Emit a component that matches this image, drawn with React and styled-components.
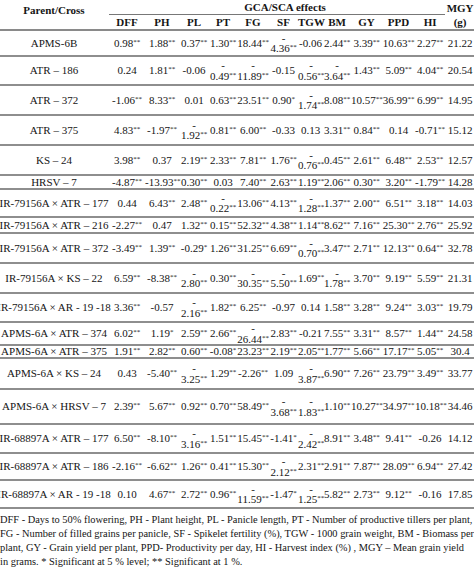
import React from 'react';
import styled, { createGlobalStyle } from 'styled-components';

const GlobalStyle = createGlobalStyle`
  html, body {
    margin: 0;
    padding: 0;
    background: #ffffff;
  }
  body {
    font-family: "Liberation Serif", "DejaVu Serif", serif;
    color: #151515;
    overflow: hidden;
  }
`;

const COLUMNS = [
  { key: 'DFF', w: 36 },
  { key: 'PH', w: 34 },
  { key: 'PL', w: 30 },
  { key: 'PT', w: 28 },
  { key: 'FG', w: 32 },
  { key: 'SF', w: 29 },
  { key: 'TGW', w: 25 },
  { key: 'BM', w: 28 },
  { key: 'GY', w: 31 },
  { key: 'PPD', w: 33 },
  { key: 'HI', w: 30 },
];

// '^' = the minus sign wrapped onto its own line above the number
// second field = row height in px, rule included
const ROWS = [
  ['APMS-6B', 26, ['0.98**', '1.88**', '0.37**', '1.30**', '18.44**', '^4.36**', '-0.06', '2.44**', '3.39**', '10.63**', '2.27**', '21.22']],
  ['ATR – 186', 29, ['0.24', '1.81**', '-0.06', '^0.49**', '^11.89**', '-0.15', '^0.56**', '^3.64**', '1.43**', '5.09**', '4.04**', '20.54']],
  ['ATR – 372', 30, ['-1.06**', '8.33**', '0.01', '0.63**', '23.51**', '0.90*', '^1.74**', '8.08**', '10.57**', '36.99**', '6.99**', '14.95']],
  ['ATR – 375', 30, ['4.83**', '-1.97**', '^1.92**', '0.81**', '6.00**', '-0.33', '0.13', '3.31**', '0.84**', '0.14', '-0.71**', '15.12']],
  ['KS – 24', 30, ['3.98**', '0.37', '2.19**', '2.33**', '7.81**', '1.76**', '^0.76**', '0.45**', '2.61**', '6.48**', '2.53**', '12.57']],
  ['HRSV – 7', 14, ['-4.87**', '-13.93**', '0.30**', '0.03', '7.40**', '2.63**', '1.19**', '2.06**', '0.30**', '3.20**', '-1.79**', '14.28']],
  ['IR-79156A × ATR – 177', 28, ['0.44', '6.43**', '2.48**', '^0.22**', '13.06**', '4.13**', '^1.28**', '1.37**', '2.00**', '6.51**', '3.18**', '14.03']],
  ['IR-79156A × ATR – 216', 16, ['-2.27**', '0.47', '1.32**', '0.15**', '52.32**', '4.38**', '1.14**', '8.62**', '7.16**', '25.30**', '2.76**', '25.92']],
  ['IR-79156A × ATR – 372', 30, ['-3.49**', '1.39**', '-0.29*', '1.26**', '31.25**', '6.69**', '^0.70**', '3.47**', '2.71**', '12.13**', '0.64**', '32.78']],
  ['IR-79156A × KS – 22', 30, ['6.59**', '-8.38**', '^2.80**', '0.30**', '^30.35**', '^5.50**', '1.69**', '^1.78**', '3.70**', '9.19**', '5.59**', '21.31']],
  ['IR-79156A × AR - 19 -18', 29, ['3.36**', '-0.57', '^2.16**', '1.82**', '6.25**', '-0.97', '0.14', '1.58**', '3.28**', '9.24**', '3.03**', '19.79']],
  ['APMS-6A × ATR – 374', 23, ['6.02**', '1.19*', '2.59**', '2.66**', '^26.44**', '2.83**', '-0.21', '7.55**', '3.31**', '8.57**', '1.44**', '24.58']],
  ['APMS-6A × ATR – 375', 13, ['1.91**', '2.82**', '0.60**', '-0.08*', '23.23**', '2.19**', '2.05**', '1.77**', '5.66**', '17.17**', '5.05**', '30.4']],
  ['APMS-6A × KS – 24', 31, ['0.43', '-5.40**', '^3.25**', '1.29**', '-2.26**', '1.09', '^3.87**', '6.90**', '7.26**', '23.79**', '3.49**', '33.77']],
  ['APMS-6A × HRSV – 7', 35, ['2.39**', '5.67**', '0.92**', '0.70**', '58.49**', '^3.68**', '^1.83**', '1.10**', '10.27**', '34.97**', '10.18**', '34.46']],
  ['IR-68897A × ATR – 177', 29, ['6.50**', '-8.10**', '^3.16**', '1.51**', '15.45**', '-1.41*', '^2.42**', '8.91**', '3.48**', '9.41**', '-0.26', '14.12']],
  ['IR-68897A × ATR – 186', 27, ['-2.16**', '-6.62**', '1.26**', '0.41**', '15.30**', '^2.12**', '2.31**', '2.91**', '7.87**', '28.09**', '6.94**', '27.42']],
  ['IR-68897A × AR - 19 -18', 28, ['0.10', '4.67**', '2.72**', '0.96**', '^11.59**', '-1.47*', '^1.25**', '5.82**', '2.73**', '9.12**', '-0.16', '17.85']],
];

const NOTES = [
  'DFF - Days to 50% flowering, PH - Plant height, PL - Panicle length, PT - Number of productive tillers per plant,',
  'FG - Number of filled grains per panicle, SF - Spikelet fertility (%), TGW - 1000 grain weight, BM - Biomass per',
  'plant, GY - Grain yield per plant, PPD- Productivity per day, HI - Harvest index (%) , MGY – Mean grain yield',
  'in grams. * Significant at 5 % level; ** Significant at 1 %.',
];

const Page = styled.div`
  width: 478px;
  margin-left: -1px;
`;

const Table = styled.table`
  width: 476px;
  table-layout: fixed;
  border-collapse: separate;
  border-spacing: 0;
  font-size: 11px;
  line-height: 11px;
`;

const HeadRow = styled.tr`
  height: ${(p) => p.$h}px;
`;

const Th = styled.th`
  padding: 0;
  font-weight: bold;
  text-align: center;
  vertical-align: ${(p) => p.$valign || 'middle'};
  white-space: nowrap;
  line-height: 14px;
  border-bottom: ${(p) => (p.$ruled ? '2px solid #8a8a8a' : 'none')};
`;

const GroupTh = styled(Th)`
  border-bottom: 1px solid #777;
  padding-left: 16px;
`;

const BodyRow = styled.tr`
  height: ${(p) => p.$h}px;
`;

const Td = styled.td`
  padding: 0;
  text-align: center;
  vertical-align: middle;
  white-space: nowrap;
  overflow: visible;
  border-bottom: 2px solid #8e8e8e;
`;

const Name = styled.div`
  display: flex;
  justify-content: center;
  white-space: nowrap;
`;

const Wrapped = styled.span`
  display: inline-flex;
  flex-direction: column;
  align-items: center;
  vertical-align: middle;
  line-height: 10.5px;
`;

const Star = styled.sup`
  font-size: 7px;
  line-height: 0;
  vertical-align: 3px;
`;

const Notes = styled.div`
  padding: 4px 0 0 1px;
  font-size: 10.4px;
  line-height: 14px;
`;

const NoteLine = styled.div`
  white-space: nowrap;
`;

const Value = ({ raw }) => {
  const wrapped = raw.startsWith('^');
  const text = wrapped ? raw.slice(1) : raw;
  const m = text.match(/^([^*]*)(\**)$/);
  const num = m ? m[1] : text;
  const stars = m ? m[2] : '';
  const body = (
    <span>
      {num}
      {stars && <Star>{stars}</Star>}
    </span>
  );
  if (!wrapped) return body;
  return (
    <Wrapped>
      <span>-</span>
      {body}
    </Wrapped>
  );
};

const App = () => (
  <Page>
    <GlobalStyle />
    <Table>
      <colgroup>
        <col style={{ width: 110 }} />
        {COLUMNS.map((c) => (
          <col key={c.key} style={{ width: c.w }} />
        ))}
        <col style={{ width: 30 }} />
      </colgroup>
      <thead>
        <HeadRow $h={14}>
          <Th rowSpan={2} $valign="top" $ruled style={{ paddingTop: 3 }}>
            Parent/Cross
          </Th>
          <GroupTh colSpan={11}>GCA/SCA effects</GroupTh>
          <Th rowSpan={2} $ruled>
            MGY
            <br />
            (g)
          </Th>
        </HeadRow>
        <HeadRow $h={15}>
          {COLUMNS.map((c) => (
            <Th key={c.key} $ruled>
              {c.key}
            </Th>
          ))}
        </HeadRow>
      </thead>
      <tbody>
        {ROWS.map(([name, h, values]) => (
          <BodyRow key={name} $h={h}>
            <Td>
              <Name>{name}</Name>
            </Td>
            {values.map((v, i) => (
              <Td key={i}>
                <Value raw={v} />
              </Td>
            ))}
          </BodyRow>
        ))}
      </tbody>
    </Table>
    <Notes>
      {NOTES.map((line) => (
        <NoteLine key={line}>{line}</NoteLine>
      ))}
    </Notes>
  </Page>
);

export default App;
